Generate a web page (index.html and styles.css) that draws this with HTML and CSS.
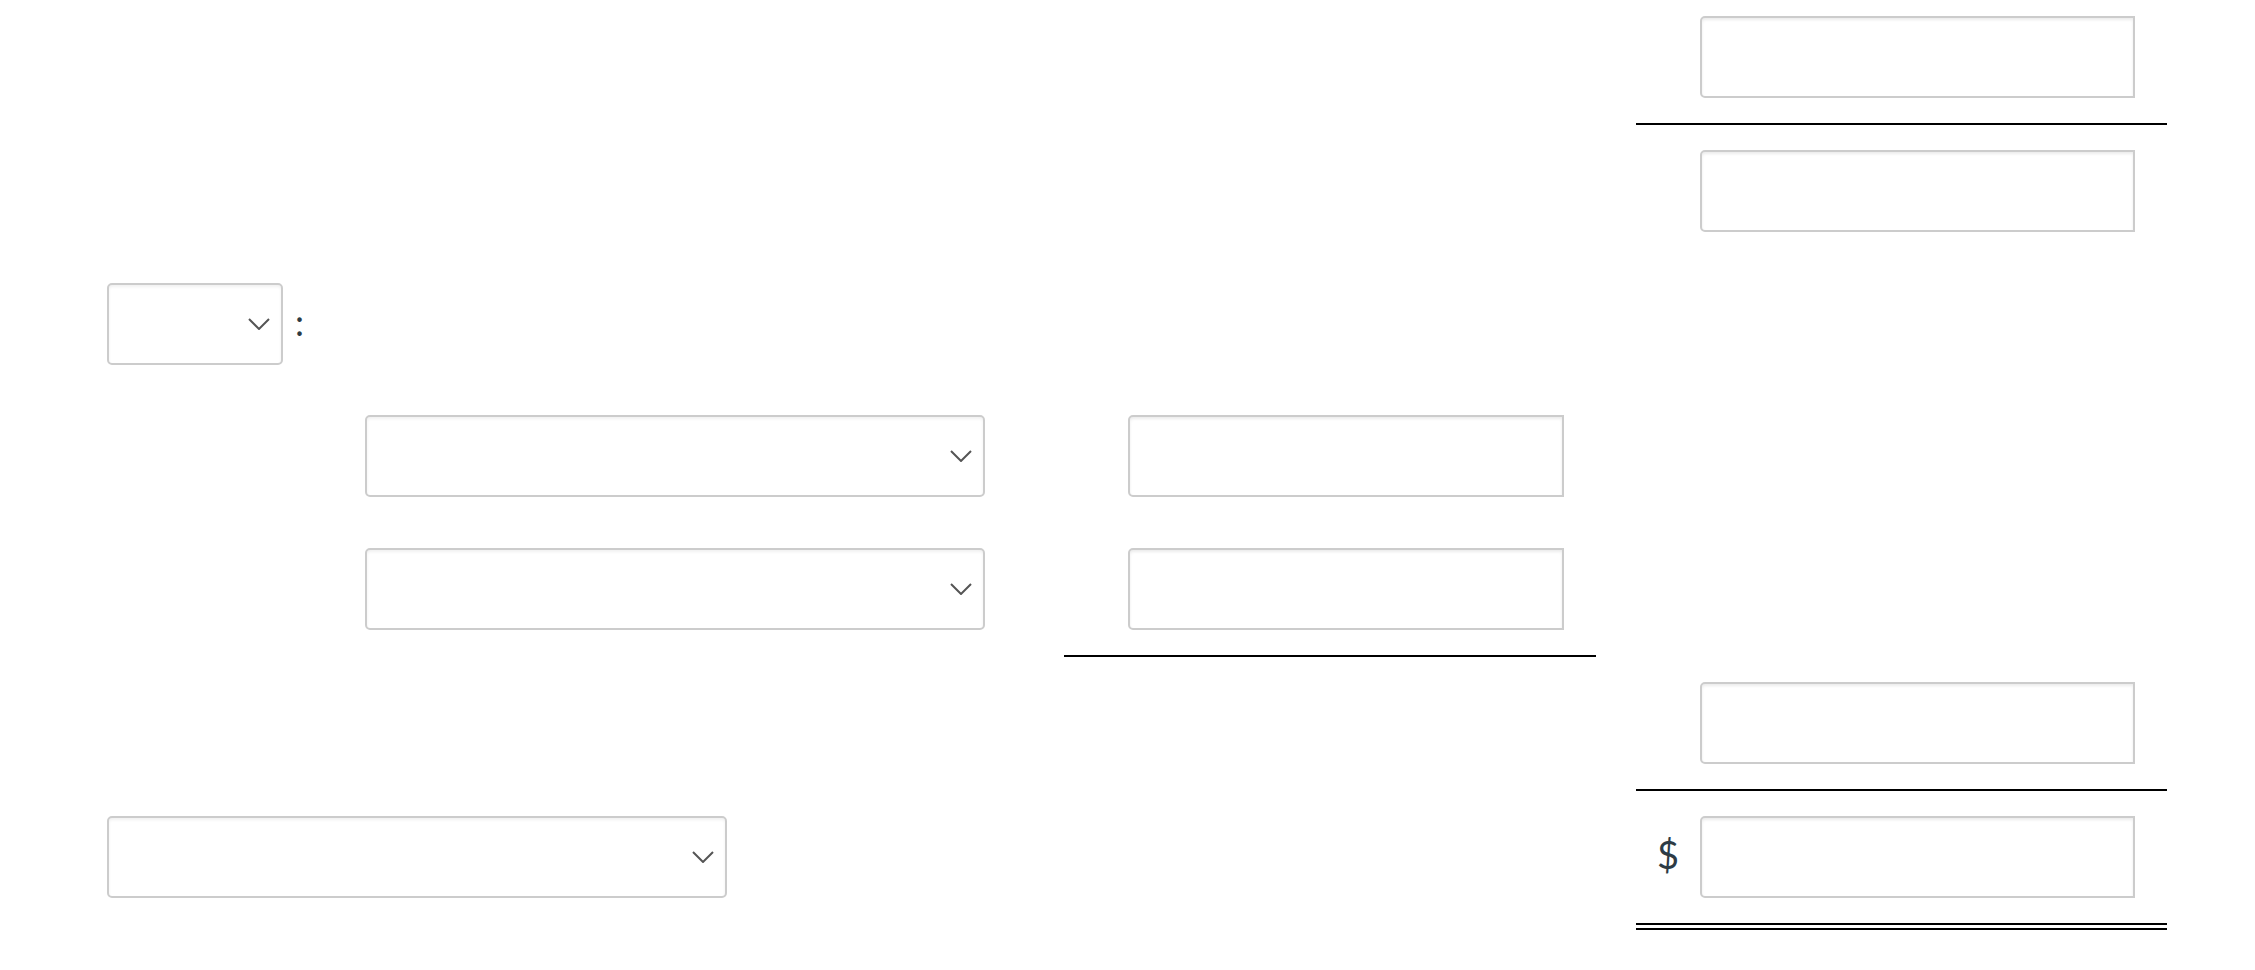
FILE: index.html
```html
<!DOCTYPE html>
<html lang="en">
<head>
<meta charset="utf-8">
<title>Statement</title>
<link rel="stylesheet" href="styles.css">
</head>
<body>
<div class="sheet">
  <div class="row">
    <div class="cell"></div>
    <div class="cell"></div>
    <div class="cell amount rule"><span class="pre"></span><input class="box" type="text" aria-label="amount 1"></div>
  </div>
  <div class="row">
    <div class="cell"></div>
    <div class="cell"></div>
    <div class="cell amount"><span class="pre"></span><input class="box" type="text" aria-label="amount 2"></div>
  </div>
  <div class="row">
    <div class="cell label">
      <div class="select select-sm" role="combobox" aria-label="heading">
        <svg class="chev" width="22" height="12" viewBox="0 0 22 12"><path d="M1 1 L11 11 L21 1"/></svg>
      </div>
      <span class="colon">:</span>
    </div>
    <div class="cell"></div>
    <div class="cell"></div>
  </div>
  <div class="row">
    <div class="cell label indent">
      <div class="select select-md" role="combobox" aria-label="item 1">
        <svg class="chev" width="22" height="12" viewBox="0 0 22 12"><path d="M1 1 L11 11 L21 1"/></svg>
      </div>
    </div>
    <div class="cell amount"><span class="pre"></span><input class="box" type="text" aria-label="amount 3"></div>
    <div class="cell"></div>
  </div>
  <div class="row">
    <div class="cell label indent">
      <div class="select select-md" role="combobox" aria-label="item 2">
        <svg class="chev" width="22" height="12" viewBox="0 0 22 12"><path d="M1 1 L11 11 L21 1"/></svg>
      </div>
    </div>
    <div class="cell amount rule"><span class="pre"></span><input class="box" type="text" aria-label="amount 4"></div>
    <div class="cell"></div>
  </div>
  <div class="row">
    <div class="cell"></div>
    <div class="cell"></div>
    <div class="cell amount rule"><span class="pre"></span><input class="box" type="text" aria-label="amount 5"></div>
  </div>
  <div class="row">
    <div class="cell label">
      <div class="select select-md" role="combobox" aria-label="total">
        <svg class="chev" width="22" height="12" viewBox="0 0 22 12"><path d="M1 1 L11 11 L21 1"/></svg>
      </div>
    </div>
    <div class="cell"></div>
    <div class="cell amount rule-double"><span class="pre">$</span><input class="box" type="text" aria-label="amount 6"></div>
  </div>
</div>
</body>
</html>
```

FILE: styles.css
```css
html, body {
  margin: 0;
  padding: 0;
  background: #ffffff;
  overflow: hidden;
}

body {
  font-family: Lato, "Open Sans", "Liberation Sans", sans-serif;
  color: #2d3b45;
}

.sheet {
  display: flex;
  flex-direction: column;
  margin-top: -9.2px;
  padding-left: 107px;
}

.row {
  display: grid;
  grid-template-columns: 917px 532px 531px;
  column-gap: 40px;
  align-items: start;
}

.cell {
  display: flex;
  align-items: center;
  padding: 25.2px 0;
  min-height: 82px;
}

.indent {
  padding-left: 258px;
}

.amount {
  padding-right: 32px;
}

.rule {
  border-bottom: 2px solid #000000;
}

.rule-double {
  border-bottom: 7px double #000000;
}

.pre {
  width: 64px;
  flex: 0 0 64px;
  text-align: center;
  font-size: 38px;
  line-height: 1;
  padding-bottom: 6px;
  color: #2d3b45;
}

.box {
  box-sizing: border-box;
  width: 436px;
  height: 82px;
  margin: 0;
  border: 2px solid #cccccc;
  border-radius: 5px 0 0 5px;
  background: #ffffff;
  box-shadow: inset 0 2px 3px rgba(0, 0, 0, 0.08);
  font: inherit;
  outline: none;
}

.select {
  box-sizing: border-box;
  height: 82px;
  border: 2px solid #cccccc;
  border-radius: 5px;
  background: #ffffff;
  box-shadow: inset 0 2px 3px rgba(0, 0, 0, 0.06);
  display: flex;
  align-items: center;
  justify-content: flex-end;
  padding-right: 11px;
}

.select-sm {
  width: 176px;
}

.select-md {
  width: 620px;
}

.chev {
  display: block;
}

.chev path {
  fill: none;
  stroke: #555555;
  stroke-width: 2;
}

.colon {
  font-size: 36px;
  line-height: 1;
  margin-left: 12px;
  padding-bottom: 4px;
  color: #2d3b45;
}
```
